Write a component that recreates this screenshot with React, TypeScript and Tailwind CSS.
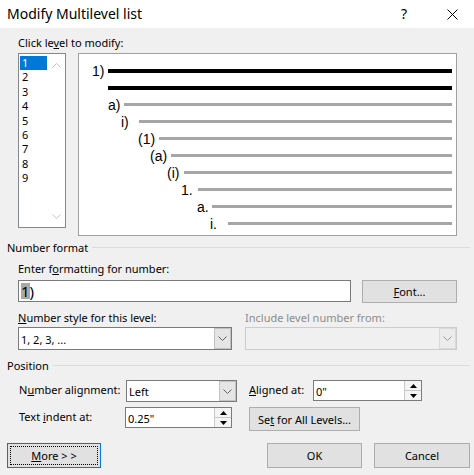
import React from "react";

const LEVELS = ["1", "2", "3", "4", "5", "6", "7", "8", "9"];

// preview rows: label, left padding, label box width (to where the bar starts), bar style
const ROWS = [
  { t: "1)", pad: "pl-[13px]", box: "w-[16px]", bar: "h-[4px] bg-black" },
  { t: "", pad: "pl-[29px]", box: "w-[0px]", bar: "h-[4px] bg-black" },
  { t: "a)", pad: "pl-[29px]", box: "w-[16px]", bar: "h-[3px] bg-[#a6a6a6]" },
  { t: "i)", pad: "pl-[42px]", box: "w-[18px]", bar: "h-[3px] bg-[#a6a6a6]" },
  { t: "(1)", pad: "pl-[59px]", box: "w-[21px]", bar: "h-[3px] bg-[#a6a6a6]" },
  { t: "(a)", pad: "pl-[71px]", box: "w-[21px]", bar: "h-[3px] bg-[#a6a6a6]" },
  { t: "(i)", pad: "pl-[88px]", box: "w-[17px]", bar: "h-[3px] bg-[#a6a6a6]" },
  { t: "1.", pad: "pl-[102px]", box: "w-[17px]", bar: "h-[3px] bg-[#a6a6a6]" },
  { t: "a.", pad: "pl-[118px]", box: "w-[15px]", bar: "h-[3px] bg-[#a6a6a6]" },
  { t: "i.", pad: "pl-[131px]", box: "w-[18px]", bar: "h-[3px] bg-[#a6a6a6]" },
];

function Chevron({ c = "#606060", up = false }: { c?: string; up?: boolean }) {
  return (
    <svg width="9" height="5" viewBox="0 0 9 5">
      <path d={up ? "M.5 4.5 4.5.5 8.5 4.5" : "M.5.5 4.5 4.5 8.5.5"} fill="none" stroke={c} />
    </svg>
  );
}

function Tri({ up }: { up?: boolean }) {
  return (
    <svg width="7" height="4" viewBox="0 0 7 4">
      <path d={up ? "M0 4 3.5 0 7 4Z" : "M0 0 3.5 4 7 0Z"} fill="#000" />
    </svg>
  );
}

function Combo({ value, disabled, className = "" }: { value?: string; disabled?: boolean; className?: string }) {
  return (
    <div className={"flex border " + (disabled ? "border-[#cccccc] bg-[#f0f0f0] " : "border-[#7a7a7a] bg-white ") + className}>
      <div className="flex-1 flex items-center pl-[2px] pt-[1px]">{value}</div>
      <div className={"w-[17px] flex items-center justify-center border " + (disabled ? "border-[#d9d9d9] bg-[#ececec]" : "border-[#c2c2c2] bg-[#e5e5e5]")}>
        <Chevron c={disabled ? "#9a9a9a" : "#606060"} />
      </div>
    </div>
  );
}

function Spin({ value, className = "" }: { value: string; className?: string }) {
  return (
    <div className={"flex border border-[#7a7a7a] bg-white " + className}>
      <div className="flex-1 flex items-center pl-[2px] pt-[1px]">{value}</div>
      <div className="w-[17px] flex flex-col border-l border-[#c9c9c9]">
        <div className="flex-1 flex items-center justify-center border-b border-[#c9c9c9] bg-[#f4f4f4]"><Tri up /></div>
        <div className="flex-1 flex items-center justify-center bg-[#f4f4f4]"><Tri /></div>
      </div>
    </div>
  );
}

function Btn({ children, className = "" }: { children: React.ReactNode; className?: string }) {
  return (
    <div className={"flex items-center justify-center border border-[#adadad] bg-[#e1e1e1] " + className}>{children}</div>
  );
}

export default function App() {
  return (
    <div className="w-[474px] h-[475px] overflow-hidden bg-[#f0f0f0] text-black font-['Noto_Sans',sans-serif] text-[11px] leading-[15px]">
      {/* title bar */}
      <div className="h-[28px] bg-white flex items-center pl-[7px] pr-[16px]">
        <span className="text-[14px] leading-[18px]">Modify Multilevel list</span>
        <span className="ml-auto text-[14px] leading-[18px] mr-[40px]">?</span>
        <svg width="11" height="11" viewBox="0 0 11 11">
          <path d="M.5.5 10.5 10.5M10.5.5.5 10.5" stroke="#000" strokeWidth="1" />
        </svg>
      </div>

      <div className="pl-[18px] mt-[7px]">
        Click le<u>v</u>el to modify:
      </div>
      <div className="flex items-start pl-[18px] mt-[3px] gap-[12px]">
        <div className="w-[48px] h-[175px] border border-[#828790] bg-white flex">
          <div className="flex-1 pt-[2px] pl-[1px]">
            {LEVELS.map((l, i) => (
              <div key={l} className={"h-[14.4px] leading-[14.4px] pl-[2px] " + (i === 0 ? "bg-[#0078d7] text-white" : "")}>{l}</div>
            ))}
          </div>
          <div className="w-[18px] flex flex-col items-center justify-between pt-[9px] pb-[8px]">
            <Chevron c="#c4c4c4" up />
            <Chevron c="#c4c4c4" />
          </div>
        </div>
        <div className="w-[379px] h-[183px] border border-[#a0a0a0] bg-white pt-[8px] pr-[4px] font-['Liberation_Sans',Arial,sans-serif] text-[14px]">
          {ROWS.map((r, i) => (
            <div key={i} className={"h-[17px] flex items-center " + r.pad}>
              <span className={"shrink-0 leading-[16px] " + r.box}>{r.t}</span>
              <div className={"flex-1 " + r.bar} />
            </div>
          ))}
        </div>
      </div>

      {/* Number format */}
      <div className="mt-[4px] flex items-center pl-[7px] pr-[4px]">
        <span>Number format</span>
        <div className="flex-1 h-px bg-[#dcdcdc] ml-[4px]" />
      </div>
      <div className="pl-[18px] mt-[6px]">
        Enter f<u>o</u>rmatting for number:
      </div>
      <div className="flex items-start pl-[18px] mt-[4px] gap-[11px]">
        <div className="w-[333px] h-[22px] border border-[#7a7a7a] bg-white flex items-center pl-[2px] text-[15px]">
          <span className="bg-[#a8a8a8] leading-[16px]">1</span>
          <span className="leading-[16px]">)</span>
        </div>
        <Btn className="w-[95px] h-[23px]"><span><u>F</u>ont...</span></Btn>
      </div>
      <div className="flex pl-[18px] mt-[7px]">
        <span className="w-[227px]"><u>N</u>umber style for this level:</span>
        <span className="text-[#8c8c8c]">Include level number from:</span>
      </div>
      <div className="flex pl-[18px] mt-[2px] gap-[13px]">
        <Combo value="1, 2, 3, ..." className="w-[214px] h-[23px]" />
        <Combo disabled className="w-[212px] h-[23px]" />
      </div>

      {/* Position */}
      <div className="mt-[8px] flex items-center pl-[7px] pr-[4px]">
        <span>Position</span>
        <div className="flex-1 h-px bg-[#dcdcdc] ml-[4px]" />
      </div>
      <div className="flex items-start pl-[19px] mt-[7px]">
        <span className="w-[107px] pt-[2px]">N<u>u</u>mber alignment:</span>
        <Combo value="Left" className="w-[111px] h-[22px]" />
        <span className="w-[64px] ml-[12px] pt-[2px]"><u>A</u>ligned at:</span>
        <Spin value={'0"'} className="w-[109px] h-[21px]" />
      </div>
      <div className="flex items-start pl-[19px] mt-[5px]">
        <span className="w-[106px] pt-[2px]">Text <u>i</u>ndent at:</span>
        <Spin value={'0.25"'} className="w-[107px] h-[21px]" />
        <Btn className="w-[111px] h-[24px] ml-[17px]"><span>Se<u>t</u> for All Levels...</span></Btn>
      </div>

      {/* buttons */}
      <div className="flex items-start mt-[12px] pl-[7px]">
        <div className="relative w-[94px] h-[25px] border border-[#0078d7] bg-[#e1e1e1] flex items-center justify-center">
          <span><u>M</u>ore &gt; &gt;</span>
          <div className="absolute inset-[2px] border border-dotted border-black" />
        </div>
        <Btn className="w-[95px] h-[25px] ml-[166px]">OK</Btn>
        <Btn className="w-[96px] h-[25px] ml-[12px]">Cancel</Btn>
      </div>
    </div>
  );
}
